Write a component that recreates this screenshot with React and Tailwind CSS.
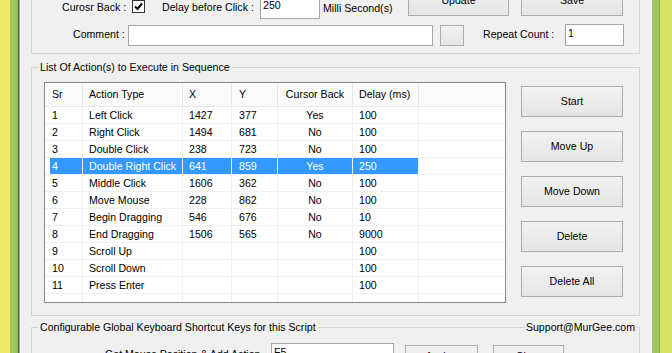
import React from "react";

function Btn({ children, className }) {
  return (
    <div
      className={
        "flex items-center justify-center border border-[#acacac] bg-linear-to-b from-[#f2f2f2] to-[#e5e5e5] leading-[13px] text-black " +
        className
      }
    >
      {children}
    </div>
  );
}

const rows = [
  ["1", "Left Click", "1427", "377", "Yes", "100"],
  ["2", "Right Click", "1494", "681", "No", "100"],
  ["3", "Double Click", "238", "723", "No", "100"],
  ["4", "Double Right Click", "641", "859", "Yes", "250"],
  ["5", "Middle Click", "1606", "362", "No", "100"],
  ["6", "Move Mouse", "228", "862", "No", "100"],
  ["7", "Begin Dragging", "546", "676", "No", "10"],
  ["8", "End Dragging", "1506", "565", "No", "9000"],
  ["9", "Scroll Up", "", "", "", "100"],
  ["10", "Scroll Down", "", "", "", "100"],
  ["11", "Press Enter", "", "", "", "100"],
  ["", "", "", "", "", ""],
];

function Row({ r, sel }) {
  const cell = "h-[16px] border-r border-[#f0f0f0] leading-[16px] whitespace-nowrap overflow-hidden";
  const s = sel ? " bg-[#3399ff] text-white" : "";
  return (
    <div className="grid shrink-0 grid-cols-[38px_100px_49px_46px_75px_66px_1fr] border-b border-[#f0f0f0]">
      <div className={cell + " pl-[5px]"}>
        <div className={"h-full pl-[2px]" + s}>{r[0]}</div>
      </div>
      <div className={cell + " pl-[6px]" + s}>{r[1]}</div>
      <div className={cell + " pl-[6px]" + s}>{r[2]}</div>
      <div className={cell + " pl-[7px]" + s}>{r[3]}</div>
      <div className={cell + " text-center" + s}>{r[4]}</div>
      <div className={cell + " pl-[6px]" + s}>{r[5]}</div>
      <div className="h-[16px]"></div>
    </div>
  );
}

export default function App() {
  return (
    <div className="flex h-[353px] w-[672px] overflow-hidden font-['Liberation_Sans',Arial,sans-serif] text-[10.6px] text-black">
      {/* left desktop strip */}
      <div className="w-[10px] shrink-0 bg-[#ece96c]"></div>
      <div className="w-[7px] shrink-0 bg-[#9dc95b]"></div>
      <div className="w-[1px] shrink-0 bg-[#86b548]"></div>
      <div className="w-[1px] shrink-0 bg-[#5f5f5f]"></div>
      <div className="w-[1px] shrink-0 bg-[#a9a9a9]"></div>

      {/* window content */}
      <div className="flex w-[631px] shrink-0 flex-col bg-[#f0f0f0] px-[11px]">
        {/* top group (cut) */}
        <div className="h-[54px] shrink-0 border-x border-b border-[#d5d5d5]">
          <div className="flex h-[19px] items-start">
            <div className="ml-[30px] mt-[1px] w-[70px] leading-[13px] whitespace-nowrap">Curosr Back :</div>
            <div className="flex h-[13px] w-[13px] items-center justify-center border border-[#333333] bg-white">
              <svg width="11" height="11" viewBox="0 0 11 11">
                <path d="M2 5.5 L4.5 8 L9 2.5" fill="none" stroke="#000" strokeWidth="2" />
              </svg>
            </div>
            <div className="ml-[17px] mt-[1px] w-[98px] leading-[13px] whitespace-nowrap">Delay before Click :</div>
            <div className="-mt-[4px] h-[23px] w-[60px] border border-[#a6a6a6] bg-white pl-[2px] pt-[2px] leading-[13px]">250</div>
            <div className="ml-[3px] mt-[2px] w-[85px] leading-[13px] whitespace-nowrap">Milli Second(s)</div>
            <Btn className="-mt-[15px] h-[31px] w-[101px]">Update</Btn>
            <Btn className="ml-[12px] -mt-[15px] h-[31px] w-[102px]">Save</Btn>
          </div>
          <div className="mt-[5px] flex h-[22px] items-start">
            <div className="ml-[41px] mt-[4px] w-[55px] leading-[13px] whitespace-nowrap">Comment :</div>
            <div className="mt-[1px] h-[21px] w-[305px] border border-[#a6a6a6] bg-white"></div>
            <div className="ml-[7px] mt-[1px] h-[21px] w-[24px] border border-[#adadad] bg-linear-to-b from-[#f2f2f2] to-[#e5e5e5]"></div>
            <div className="ml-[19px] mt-[4px] w-[82px] leading-[13px] whitespace-nowrap">Repeat Count :</div>
            <div className="h-[22px] w-[59px] border border-[#a6a6a6] bg-white pl-[2px] pt-[2px] leading-[13px]">1</div>
          </div>
        </div>

        {/* list group */}
        <fieldset className="mt-[7px] shrink-0 border border-[#d5d5d5] pb-[12px]">
          <legend className="ml-[6px] px-[2px] leading-[13px]">List Of Action(s) to Execute in Sequence</legend>
          <div className="flex items-start">
            <div className="ml-[12px] mt-[8px] flex h-[221px] w-[462px] shrink-0 flex-col overflow-hidden border border-[#828790] bg-white">
              <div className="grid h-[24px] shrink-0 grid-cols-[38px_100px_49px_46px_75px_66px_1fr] border-b border-[#e3e8ee] bg-[#fbfbfb] leading-[23px]">
                <div className="border-r border-[#e3e8ee] pl-[7px]">Sr</div>
                <div className="border-r border-[#e3e8ee] pl-[6px]">Action Type</div>
                <div className="border-r border-[#e3e8ee] pl-[6px]">X</div>
                <div className="border-r border-[#e3e8ee] pl-[7px]">Y</div>
                <div className="border-r border-[#e3e8ee] text-center whitespace-nowrap">Cursor Back</div>
                <div className="border-r border-[#e3e8ee] pl-[6px] whitespace-nowrap">Delay (ms)</div>
                <div></div>
              </div>
              {rows.map((r, i) => (
                <Row key={i} r={r} sel={i === 3} />
              ))}
            </div>
            <div className="ml-[15px] mt-[12px] flex shrink-0 flex-col gap-[14px]">
              <Btn className="h-[31px] w-[102px]">Start</Btn>
              <Btn className="h-[31px] w-[102px]">Move Up</Btn>
              <Btn className="h-[31px] w-[102px]">Move Down</Btn>
              <Btn className="h-[31px] w-[102px]">Delete</Btn>
              <Btn className="h-[31px] w-[102px]">Delete All</Btn>
            </div>
          </div>
        </fieldset>

        {/* shortcut group */}
        <fieldset className="relative mt-[5px] shrink-0 border border-[#d5d5d5] pb-[20px]">
          <legend className="ml-[6px] px-[2px] leading-[13px]">Configurable Global Keyboard Shortcut Keys for this Script</legend>
          <div className="absolute right-[3px] top-[-13px] bg-[#f0f0f0] px-[1px] leading-[13px]">Support@MurGee.com</div>
          <div className="mt-[9px] flex items-start">
            <div className="ml-[73px] mt-[5px] w-[166px] leading-[13px] whitespace-nowrap">Get Mouse Position &amp; Add Action</div>
            <div className="h-[21px] w-[123px] border border-[#a6a6a6] bg-white pl-[2px] pt-[2px] leading-[13px]">F5</div>
            <Btn className="ml-[11px] mt-[2px] h-[23px] w-[73px]">Assign</Btn>
            <Btn className="ml-[15px] mt-[2px] h-[23px] w-[71px]">Clear</Btn>
          </div>
        </fieldset>
      </div>

      {/* right desktop strip */}
      <div className="w-[1px] shrink-0 bg-[#fafafa]"></div>
      <div className="w-[7px] shrink-0 bg-[#9dc95b]"></div>
      <div className="w-[1px] shrink-0 bg-[#80ad44]"></div>
      <div className="flex-1 bg-[#d6e262]"></div>
    </div>
  );
}
